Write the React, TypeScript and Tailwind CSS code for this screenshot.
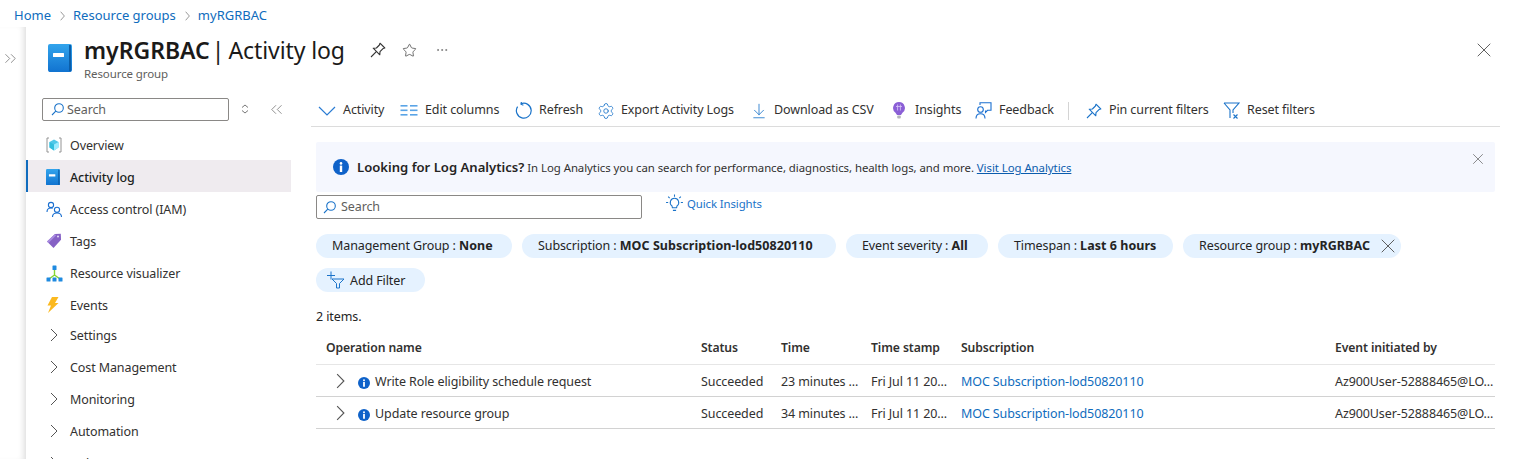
import React from "react";
import { ChevronsRight, ChevronsLeft, Star, Ellipsis, X, Settings, ArrowDownToLine } from "lucide-react";

const Book = ({ s = 24, id = "bk" }: { s?: number; id?: string }) => (
  <svg width={s} height={s * 1.17} viewBox="0 0 24 28">
    <defs>
      <linearGradient id={id} x1="0" y1="0" x2="0" y2="1">
        <stop offset="0" stopColor="#32a4ec" />
        <stop offset="1" stopColor="#1173d0" />
      </linearGradient>
    </defs>
    <path d="M2 0h20a2 2 0 0 1 2 2v24a2 2 0 0 1-2 2H2a2 2 0 0 1-2-2V2a2 2 0 0 1 2-2z" fill={`url(#${id})`} />
    <rect x="21" y="1" width="2" height="26" fill="#0b5ea8" />
    <rect x="5" y="9" width="11" height="4" rx="0.5" fill="#fff" />
  </svg>
);

const InfoDot = ({ s = 14 }: { s?: number }) => (
  <svg width={s} height={s} viewBox="0 0 16 16">
    <circle cx="8" cy="8" r="8" fill="#0f62c9" />
    <circle cx="8" cy="4.4" r="1.3" fill="#fff" />
    <rect x="6.8" y="6.6" width="2.4" height="6.4" fill="#fff" />
  </svg>
);

const Chev = ({ w = 8, h = 14, c = "#555" }: { w?: number; h?: number; c?: string }) => (
  <svg width={w} height={h} viewBox="0 0 8 14" fill="none" stroke={c} strokeWidth="1" preserveAspectRatio="none">
    <path d="M1 1l6 6-6 6" />
  </svg>
);

const Magnifier = () => (
  <svg width="13" height="13" viewBox="0 0 13 13" fill="none" stroke="#1a73c9" strokeWidth="1.1">
    <circle cx="8" cy="5" r="4.3" />
    <path d="M4.8 8.2L1 12" />
  </svg>
);

const PinIcon = ({ c, s = 16 }: { c: string; s?: number }) => (
  <svg width={s} height={s} viewBox="0 0 16 16" fill="none" stroke={c} strokeWidth="1.1" strokeLinejoin="round">
    <path d="M10 1.2l4.8 4.8-1.8.6-3 3-.2 3.2L3.2 6.2l3.2-.2 3-3z" />
    <path d="M6.3 9.7L1 15" />
  </svg>
);

const nav: { label: string; icon: React.ReactNode; active?: boolean }[] = [
  {
    label: "Overview",
    icon: (
      <svg width="16" height="16" viewBox="0 0 16 16">
        <path d="M3 1H1v14h2M13 1h2v14h-2" fill="none" stroke="#949494" strokeWidth="1" />
        <path d="M8 2.5l4.5 2.5v5.5L8 13.5 3.5 10.5V5z" fill="#50c7e8" />
        <path d="M8 7.5l4.5-2.5v5.5L8 13.5z" fill="#9cebff" />
        <path d="M3.5 5L8 7.5v6L3.5 10.5z" fill="#32bedd" />
      </svg>
    ),
  },
  { label: "Activity log", icon: <Book s={14} id="bk2" />, active: true },
  {
    label: "Access control (IAM)",
    icon: (
      <svg width="17" height="17" viewBox="0 0 17 17" fill="none" stroke="#1a6fd0" strokeWidth="1.1">
        <circle cx="5" cy="4" r="2.6" />
        <path d="M1 11c0-3 1.7-4 4-4 .7 0 1.3.1 1.8.3" />
        <circle cx="11" cy="8.8" r="2.6" />
        <path d="M6.5 16c0-2.6 1.8-4 4.5-4s4.5 1.4 4.5 4" />
      </svg>
    ),
  },
  {
    label: "Tags",
    icon: (
      <svg width="16" height="16" viewBox="0 0 16 16">
        <path d="M9 1l5.8-.2.2 6L7.5 15 1 8.5z" fill="#8661c5" />
        <path d="M1 8.5L9 1l1 1.5L2.5 10z" fill="#a98ce0" />
        <circle cx="12" cy="3.6" r="1" fill="#e8e0f8" />
      </svg>
    ),
  },
  {
    label: "Resource visualizer",
    icon: (
      <svg width="17" height="17" viewBox="0 0 17 17">
        <path d="M8.5 5v5M8.5 10L3 14M8.5 10l5.5 4" stroke="#86d633" strokeWidth="1.4" fill="none" />
        <rect x="6.5" y="0.5" width="4" height="4.5" rx="0.6" fill="#1f8ae0" />
        <rect x="0.5" y="12.5" width="4" height="4" rx="0.6" fill="#1f8ae0" />
        <rect x="6.5" y="12.5" width="4" height="4" rx="0.6" fill="#1f8ae0" />
        <rect x="12.5" y="12.5" width="4" height="4" rx="0.6" fill="#1f8ae0" />
      </svg>
    ),
  },
  {
    label: "Events",
    icon: (
      <svg width="12" height="16" viewBox="0 0 12 16" className="ml-[1px]">
        <path d="M5 0h6.5L8 6h3.5L1 16l3-7.5H.5z" fill="#fbb91f" />
      </svg>
    ),
  },
];

const groups = ["Settings", "Cost Management", "Monitoring", "Automation", "Help"];

const tools: { label: string; w: string; gap: string; icon: React.ReactNode }[] = [
  { label: "Activity", w: "w-[82px]", gap: "gap-[7px]", icon: <svg width="18" height="18" viewBox="0 0 18 18" fill="none" stroke="#2b7cd3" strokeWidth="1.2"><path d="M1 5l8 8 8-8" /></svg> },
  { label: "Edit columns", w: "w-[115px]", gap: "gap-[7px]", icon: <svg width="18" height="18" viewBox="0 0 18 18" fill="#5aa4e6"><rect x="0.5" y="3" width="7" height="1.6" /><rect x="10" y="3" width="7.5" height="1.6" /><rect x="0.5" y="7.5" width="7" height="1.6" /><rect x="10" y="7.5" width="7.5" height="1.6" /><rect x="0.5" y="12" width="7" height="1.6" /><rect x="10" y="12" width="7.5" height="1.6" /></svg> },
  {
    label: "Refresh", w: "w-[82px]", gap: "gap-[7px]",
    icon: (
      <svg width="17" height="17" viewBox="0 0 17 17" fill="none" stroke="#1a73c9" strokeWidth="1.2">
        <path d="M6 1.8A7.4 7.4 0 1 1 2.6 4.6" />
        <path d="M6.4 0L6 2.2l2.4 1" />
      </svg>
    ),
  },
  { label: "Export Activity Logs", w: "w-[155px]", gap: "gap-[6px]", icon: <Settings size={18} strokeWidth={1.1} color="#1a73c9" /> },
  { label: "Download as CSV", w: "w-[141px]", gap: "gap-[6px]", icon: <ArrowDownToLine size={18} strokeWidth={1.1} color="#1a73c9" className="-ml-[2px]" /> },
  {
    label: "Insights", w: "w-[82px]", gap: "gap-[10px]",
    icon: (
      <svg width="12" height="17" viewBox="0 0 12 17">
        <path d="M6 0a6 6 0 0 1 3.5 10.8L8 13H4l-1.5-2.2A6 6 0 0 1 6 0z" fill="#8b5fd6" />
        <path d="M3 4.5h6M4.6 2.5v6M7.4 2.5v6" stroke="#d9c8f7" strokeWidth="0.8" />
        <rect x="4.2" y="13.4" width="3.6" height="3" rx="1" fill="#b4b4bc" />
      </svg>
    ),
  },
  {
    label: "Feedback", w: "w-[94px]", gap: "gap-[7px]",
    icon: (
      <svg width="17" height="17" viewBox="0 0 17 17" fill="none" stroke="#1a6fd0" strokeWidth="1.1">
        <path d="M5 3V.8h11v7.5h-3.5l-2 2V8.5" />
        <circle cx="5.5" cy="7.5" r="2.8" />
        <path d="M1 16.5c0-3 2-4.8 4.5-4.8s4.5 1.8 4.5 4.8" />
      </svg>
    ),
  },
];

function Pill({ k, v, w, x }: { k: string; v: string; w: string; x?: boolean }) {
  return (
    <div className={"h-6 rounded-full bg-[#e5f2ff] pl-4 flex items-center whitespace-nowrap text-[#242424] " + w}>
      <span>{k} :&nbsp;</span>
      <span className="font-bold tracking-[0.05px]">{v}</span>
      {x && <X size={24} strokeWidth={0.95} className="ml-auto text-[#555] mr-[1px]" />}
    </div>
  );
}

const rows = [
  { name: "Write Role eligibility schedule request", time: "23 minutes ..." },
  { name: "Update resource group", time: "34 minutes ..." },
];

const grid = "grid grid-cols-[375px_80px_90px_90px_374px_160px] pl-[10px]";

export default function App() {
  return (
    <div className="w-[1515px] h-[459px] overflow-hidden bg-white text-[12.5px] tracking-[-0.1px] text-[#323130] font-['Noto_Sans',sans-serif] flex flex-col relative">
      <div className="h-[32px] shrink-0 pl-[14px] flex items-center text-[13px] tracking-normal text-[#0f6cbd]">
        <span>Home</span>
        <span className="mx-[9px]"><Chev w={5} h={10} c="#666" /></span>
        <span className="-ml-[1px]">Resource groups</span>
        <span className="mx-[9px]"><Chev w={5} h={10} c="#666" /></span>
        <span className="-ml-[1px]">myRGRBAC</span>
      </div>
      <div className="flex flex-1 min-h-0">
        <div className="w-[26px] shrink-0 -mt-[5px] pt-[22px] pl-[1px] shadow-[inset_-6px_0_6px_-4px_#dcdcdc] bg-white">
          <ChevronsRight size={19} strokeWidth={0.9} className="text-[#666]" />
        </div>
        <div className="flex-1 min-w-0 flex flex-col">
          <div className="h-[65px] shrink-0 flex pl-[22px] pr-[23px]">
            <div className="pt-[12px] w-[36px]"><Book s={24} /></div>
            <div className="flex flex-col">
              <div className="flex items-center h-[36px]">
                <span className="text-[23px] leading-[36px] tracking-normal text-[#1b1a19] whitespace-nowrap">
                  <span className="font-semibold">myRGRBAC</span>
                  <span className="ml-[2px] mr-[5px]">|</span>
                  <span className="-ml-[1px] tracking-[-0.1px]">Activity log</span>
                </span>
                <span className="ml-[25px]"><PinIcon c="#333" /></span>
                <Star size={15} strokeWidth={1.1} className="ml-[16px] text-[#333]" />
                <Ellipsis size={14} strokeWidth={1} className="ml-[18px] text-[#555]" />
              </div>
              <div className="text-[11.5px] text-[#605e5c] leading-[16px] -mt-[2px]">Resource group</div>
            </div>
            <X size={24} strokeWidth={0.85} className="ml-auto mt-[6px] -mr-[4px] text-[#444]" />
          </div>
          <div className="flex flex-1 min-h-0">
            <div className="w-[265px] shrink-0 overflow-hidden">
              <div className="flex items-center pl-[16px] h-[24px]">
                <div className="w-[187px] h-[23px] border border-[#8a8886] rounded-[2px] flex items-center pl-[8px] gap-[3px] text-[#605e5c]">
                  <Magnifier />
                  <span className="pt-[2px]">Search</span>
                </div>
                <svg width="8" height="10" viewBox="0 0 8 10" className="ml-[12px]" fill="none" stroke="#777"><path d="M1 3.5L4 1l3 2.5M1 6.5L4 9l3-2.5" /></svg>
                <ChevronsLeft size={19} strokeWidth={0.9} className="ml-[18px] text-[#666]" />
              </div>
              <div className="mt-[7px]">
                {nav.map((n) => (
                  <div key={n.label} className={"flex items-center pt-[2px] " + (n.label === "Events" ? "h-[31px] " : "h-[32px] ") + (n.active ? "bg-[#efebef] border-l-2 border-[#0f6cbd] pl-[18px] font-medium text-[#201f1e]" : "pl-[20px]")}>
                    <span className="w-[24px] flex items-center justify-start">{n.icon}</span>
                    <span className="pt-[3px]">{n.label}</span>
                  </div>
                ))}
                {groups.map((g, i) => (
                  <div key={g} className={"flex items-center h-[32px] pt-[2px] pl-[24px] " + (i === 0 ? "-mt-[1px]" : "")}>
                    <span className="w-[20px]"><Chev /></span>
                    <span className="pt-[3px]">{g}</span>
                  </div>
                ))}
              </div>
            </div>
            <div className="flex-1 min-w-0 pl-[25px]">
              <div className="h-[30px] -ml-[5px] w-[1189px] border-b border-[#dcdcdc] flex items-center pl-[7px] pb-[2px]">
                {tools.map((t) => (
                  <div key={t.label} className={"flex items-center whitespace-nowrap " + t.w + " " + t.gap}>
                    {t.icon}
                    {t.label}
                  </div>
                ))}
                <div className="w-px h-[18px] bg-[#d4d4d4] ml-[-1px] mr-[17px]" />
                <div className="flex items-center whitespace-nowrap w-[137px] gap-[7px]">
                  <PinIcon c="#1a73c9" />
                  Pin current filters
                </div>
                <div className="flex items-center whitespace-nowrap gap-[7px]">
                  <svg width="17" height="17" viewBox="0 0 17 17" fill="none" stroke="#1a73c9" strokeWidth="1.1">
                    <path d="M1 1h15l-6 7v3M7 16V8L1 1" />
                    <path d="M10.5 12.5l4 4M14.5 12.5l-4 4" />
                  </svg>
                  Reset filters
                </div>
              </div>
              <div className="mt-[15px] w-[1179px] h-[50px] bg-[#f5f7fe] rounded-[2px] flex items-center pl-[17px] pr-[12px] relative">
                <InfoDot s={16} />
                <span className="ml-[8px] pt-[2px] font-semibold text-[13.1px] tracking-normal text-[#252423] whitespace-nowrap">Looking for Log Analytics?</span>
                <span className="ml-[3px] pt-[2px] text-[11.4px] tracking-[-0.05px] whitespace-nowrap">In Log Analytics you can search for performance, diagnostics, health logs, and more. <span className="underline text-[#0b5cad]">Visit Log Analytics</span></span>
                <X size={18} strokeWidth={0.9} className="absolute right-[8px] top-[8px] text-[#555]" />
              </div>
              <div className="mt-[3px] flex items-start">
                <div className="w-[326px] h-[24px] border border-[#8a8886] rounded-[2px] flex items-center pl-[6px] gap-[5px] text-[#605e5c]">
                  <Magnifier />
                  Search
                </div>
                <div className="ml-[23px] flex items-center text-[#1a73c9] gap-[3px] text-[11.4px] -mt-[1px]">
                  <svg width="19" height="19" viewBox="0 0 18 18" fill="none" stroke="#1a73c9" strokeWidth="1">
                    <path d="M9 4a4 4 0 0 1 2.4 7.2L11 13H7l-.4-1.8A4 4 0 0 1 9 4zM7.5 15.5h3" />
                    <path d="M9 .5v2M3 2.5l1.4 1.4M15 2.5l-1.4 1.4M1 8h2M15 8h2" />
                  </svg>
                  Quick Insights
                </div>
              </div>
              <div className="mt-[15px] flex flex-wrap gap-x-[10px] gap-y-[10px]">
                <Pill k="Management Group" v="None" w="w-[196px]" />
                <Pill k="Subscription" v="MOC Subscription-lod50820110" w="w-[314px]" />
                <Pill k="Event severity" v="All" w="w-[142px]" />
                <Pill k="Timespan" v="Last 6 hours" w="w-[175px]" />
                <Pill k="Resource group" v="myRGRBAC" w="w-[218px]" x />
              </div>
              <div className="mt-[10px] flex w-[109px] h-6 rounded-full bg-[#e5f2ff] items-center pl-[11px] gap-[5px] text-[#242424]">
                <svg width="18" height="18" viewBox="0 0 18 18" fill="none" stroke="#1a73c9" strokeWidth="1"><path d="M0 4.5h8M4 .5v8" /><path d="M5 8h12l-4.5 4.5V17h-3v-4.5z" /></svg>
                <span className="pt-[2px]">Add Filter</span>
              </div>
              <div className="mt-[15px] text-[#242424] leading-[20px]">2 items.</div>
              <div className="w-[1179px] mt-[4px]">
                <div className={grid + " h-[34px] pt-[2px] items-center font-semibold text-[12.2px] border-b border-[#e6e6e6] text-[#323130]"}>
                  <div>Operation name</div><div>Status</div><div>Time</div><div>Time stamp</div><div>Subscription</div><div>Event initiated by</div>
                </div>
                {rows.map((r) => (
                  <div key={r.name} className={grid + " h-[32px] pt-[4px] items-center border-b border-[#d2d2d2] whitespace-nowrap"}>
                    <div className="flex items-center">
                      <span className="w-[22px] flex justify-center pl-[6px] -mt-[3px]"><Chev w={9} h={16} /></span>
                      <span className="ml-[10px] mr-[5px] flex"><InfoDot s={12} /></span>
                      {r.name}
                    </div>
                    <div>Succeeded</div>
                    <div>{r.time}</div>
                    <div>Fri Jul 11 20...</div>
                    <div className="text-[#0f6cbd]">MOC Subscription-lod50820110</div>
                    <div>Az900User-52888465@LO...</div>
                  </div>
                ))}
              </div>
            </div>
          </div>
        </div>
      </div>
    </div>
  );
}
